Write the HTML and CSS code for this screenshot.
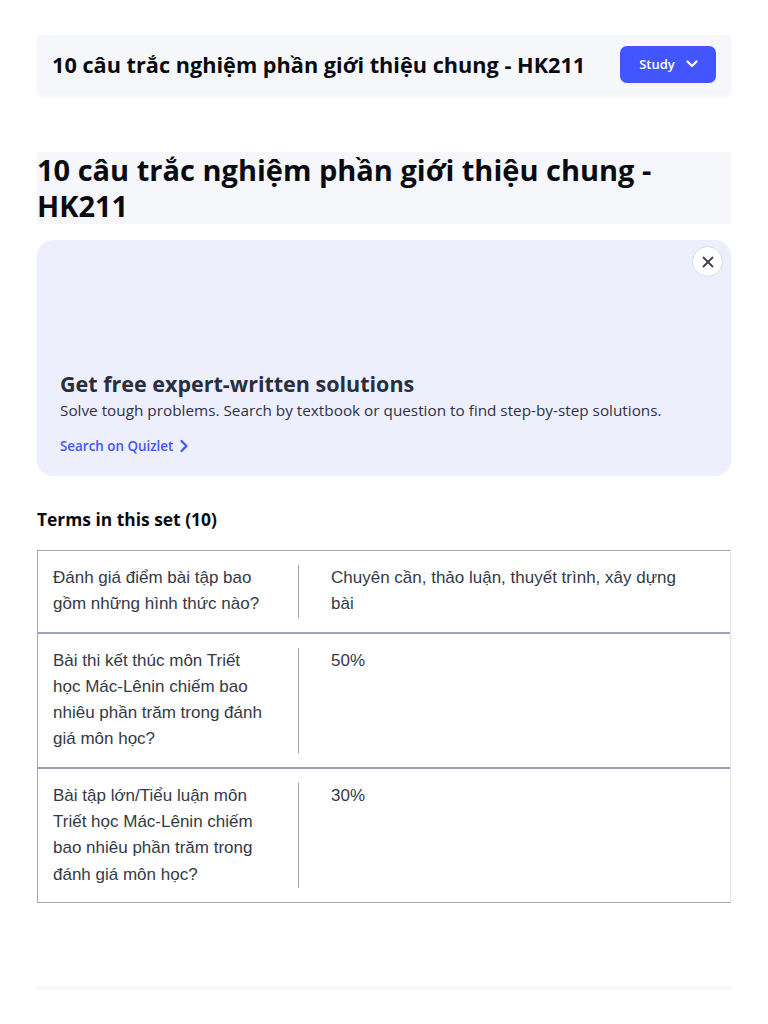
FILE: index.html
```html
<!DOCTYPE html>
<html lang="vi">
<head>
<meta charset="utf-8">
<title>10 câu trắc nghiệm phần giới thiệu chung - HK211</title>
<link rel="stylesheet" href="styles.css">
</head>
<body>
<div class="page">
  <header class="topbar">
    <div class="topbar-title">10 câu trắc nghiệm phần giới thiệu chung - HK211</div>
    <button class="study-btn">Study
      <svg class="chev" width="14" height="14" viewBox="0 0 14 14"><path d="M2.5 4.5 L7 9 L11.5 4.5" fill="none" stroke="#fff" stroke-width="2.2" stroke-linecap="round" stroke-linejoin="round"/></svg>
    </button>
  </header>

  <h1 class="set-title">10 câu trắc nghiệm phần giới thiệu chung - HK211</h1>

  <section class="promo">
    <button class="close-btn" aria-label="Close">
      <svg width="12" height="12" viewBox="0 0 12 12"><path d="M1.5 1.5 L10.5 10.5 M10.5 1.5 L1.5 10.5" stroke="#3a3f55" stroke-width="1.8" stroke-linecap="round"/></svg>
    </button>
    <div class="promo-body">
      <h2 class="promo-title">Get free expert-written solutions</h2>
      <p class="promo-text">Solve tough problems. Search by textbook or question to find step-by-step solutions.</p>
      <a class="promo-link" href="#">Search on Quizlet
        <svg width="10" height="14" viewBox="0 0 10 14"><path d="M2.5 2 L7.5 7 L2.5 12" fill="none" stroke="#4255ff" stroke-width="2.2" stroke-linecap="round" stroke-linejoin="round"/></svg>
      </a>
    </div>
  </section>

  <h3 class="terms-heading">Terms in this set (10)</h3>

  <div class="terms">
    <div class="term-row">
      <div class="term-word">Đánh giá điểm bài tập bao gồm những hình thức nào?</div>
      <div class="term-def">Chuyên cần, thảo luận, thuyết trình, xây dựng bài</div>
    </div>
    <div class="term-row">
      <div class="term-word">Bài thi kết thúc môn Triết học Mác-Lênin chiếm bao nhiêu phần trăm trong đánh giá môn học?</div>
      <div class="term-def">50%</div>
    </div>
    <div class="term-row">
      <div class="term-word">Bài tập lớn/Tiểu luận môn Triết học Mác-Lênin chiếm bao nhiêu phần trăm trong đánh giá môn học?</div>
      <div class="term-def">30%</div>
    </div>
  </div>

  <div class="footer-line"></div>
</div>
</body>
</html>
```

FILE: styles.css
```css
* { box-sizing: border-box; }
html, body { margin: 0; padding: 0; background: #fff; }
body {
  font-family: "Open Sans", "Noto Sans", sans-serif;
  color: #1a1d28;
}
.page {
  width: 694px;
  margin: 0 auto;
  padding-top: 35px;
  display: flex;
  flex-direction: column;
}
.topbar {
  height: 58px;
  background: #f6f7fb;
  display: flex;
  align-items: center;
  justify-content: space-between;
  padding: 0 15px 0 15px;
  box-shadow: 0 4px 4px rgba(40, 46, 62, 0.04);
}
.topbar-title {
  font-weight: 700;
  font-size: 21.7px;
  color: #0a0b10;
}
.study-btn {
  width: 96px;
  height: 37px;
  border: none;
  border-radius: 7px;
  background: #4255ff;
  color: #fff;
  font-family: "Open Sans", sans-serif;
  font-weight: 600;
  font-size: 13px;
  display: flex;
  align-items: center;
  justify-content: center;
  gap: 10px;
  padding: 0 0 0 2px;
}
.chev { display: block; }
.set-title {
  margin: 59px 0 0 0;
  background: #f6f7fb;
  font-size: 29px;
  line-height: 36px;
  font-weight: 700;
  color: #0a0b10;
  padding: 0;
}
.promo {
  margin-top: 16px;
  height: 236px;
  background: #eeeffd;
  border-radius: 16px;
  position: relative;
  display: flex;
  flex-direction: column;
  justify-content: flex-end;
  padding: 0 23px 20px 23px;
}
.close-btn {
  position: absolute;
  top: 6px;
  right: 8px;
  width: 31px;
  height: 31px;
  border-radius: 50%;
  background: #fff;
  border: 1px solid #d9dbe9;
  display: flex;
  align-items: center;
  justify-content: center;
  padding: 0;
}
.promo-title {
  margin: 0;
  font-size: 21.5px;
  line-height: 28px;
  font-weight: 700;
  color: #282e3e;
}
.promo-text {
  margin: 1px 0 0 0;
  font-size: 15.3px;
  line-height: 22px;
  color: #2e3245;
}
.promo-link {
  margin-top: 16px;
  display: inline-flex;
  align-items: center;
  gap: 6px;
  font-size: 13.4px;
  font-weight: 600;
  color: #4255ff;
  text-decoration: none;
}
.terms-heading {
  margin: 31px 0 0 0;
  font-size: 17.4px;
  line-height: 24px;
  font-weight: 700;
  color: #0a0b10;
}
.terms {
  margin-top: 19px;
  border: 1px solid #a4a8b3;
  border-right-color: #e3e5ea;
  display: flex;
  flex-direction: column;
}
.term-row {
  display: grid;
  grid-template-columns: 246px 1fr;
  padding: 14px 15px 14px 15px;
  border-bottom: 2px solid #9ca2b8;
  font-family: "Liberation Sans", Arial, sans-serif;
  font-size: 17px;
  line-height: 26.3px;
  color: #353947;
}
.term-row:last-child { border-bottom: none; }
.term-word {
  padding-right: 30px;
  border-right: 1px solid #9ca2b8;
}
.term-def {
  padding-left: 32px;
  padding-right: 20px;
}
.footer-line {
  margin-top: 84px;
  height: 3px;
  background: #f7f7f8;
  box-shadow: 0 -1px 3px rgba(0,0,0,0.03);
}
```
